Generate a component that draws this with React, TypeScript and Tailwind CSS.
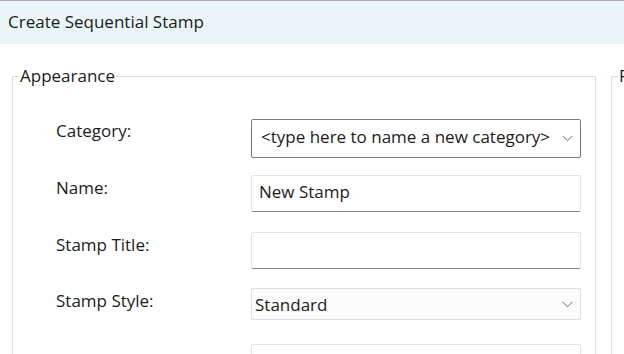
import React from "react";

function Chevron() {
  return (
    <svg width="11" height="7" viewBox="0 0 11 7" className="shrink-0">
      <polyline points="0.5,0.8 5.5,5.8 10.5,0.8" fill="none" stroke="#6b6b6b" strokeWidth="1" />
    </svg>
  );
}

export default function App() {
  return (
    <div className="w-[624px] h-[354px] overflow-hidden bg-white text-[#1b1b1b] font-['Open_Sans',sans-serif] text-[17px]">
      <div className="h-[44px] border-t border-[#ababab] bg-[#e9f5f7] flex items-center pl-[8px] pb-[2px]">
        Create Sequential Stamp
      </div>
      <div className="flex pl-[12px] pt-[21px]">
        <fieldset className="w-[584px] shrink-0 border border-[#dcdcdc] h-[320px]">
          <legend className="ml-[6px] px-[1px] leading-[22px]">Appearance</legend>
          <div className="pl-[43px] pt-[32px]">
            <div className="flex">
              <div className="w-[195px] pt-[1px] leading-[22px]">Category:</div>
              <div className="w-[330px] h-[39px] border border-[#7a7a7a] rounded-[2px] flex items-center pl-[9px] pr-[7px]">
                <span className="flex-1 whitespace-nowrap pb-[4px]">&lt;type here to name a new category&gt;</span>
                <Chevron />
              </div>
            </div>
            <div className="flex mt-[17px]">
              <div className="w-[195px] pt-[2px] leading-[22px]">Name:</div>
              <div className="w-[330px] h-[37px] border border-[#e5e5e5] border-b-[#868686] rounded-[2px] flex items-center pl-[7px] pb-[3px]">
                New Stamp
              </div>
            </div>
            <div className="flex mt-[20px]">
              <div className="w-[195px] pt-[2px] leading-[22px]">Stamp Title:</div>
              <div className="w-[330px] h-[37px] border border-[#e5e5e5] border-b-[#868686] rounded-[2px]" />
            </div>
            <div className="flex mt-[19px]">
              <div className="w-[195px] pt-[2px] leading-[22px]">Stamp Style:</div>
              <div className="w-[330px] h-[32px] border border-[#e0e0e0] bg-[#fbfbfb] rounded-[2px] flex items-center pl-[3px] pr-[7px]">
                <span className="flex-1 pt-[2px]">Standard</span>
                <Chevron />
              </div>
            </div>
            <div className="flex mt-[24px]">
              <div className="w-[195px]" />
              <div className="w-[330px] h-[37px] border border-[#e5e5e5] rounded-[2px]" />
            </div>
          </div>
        </fieldset>
        <fieldset className="ml-[15px] w-[200px] shrink-0 border border-[#dcdcdc] h-[320px]">
          <legend className="ml-[6px] px-[1px] leading-[22px]">Properties</legend>
        </fieldset>
      </div>
    </div>
  );
}
